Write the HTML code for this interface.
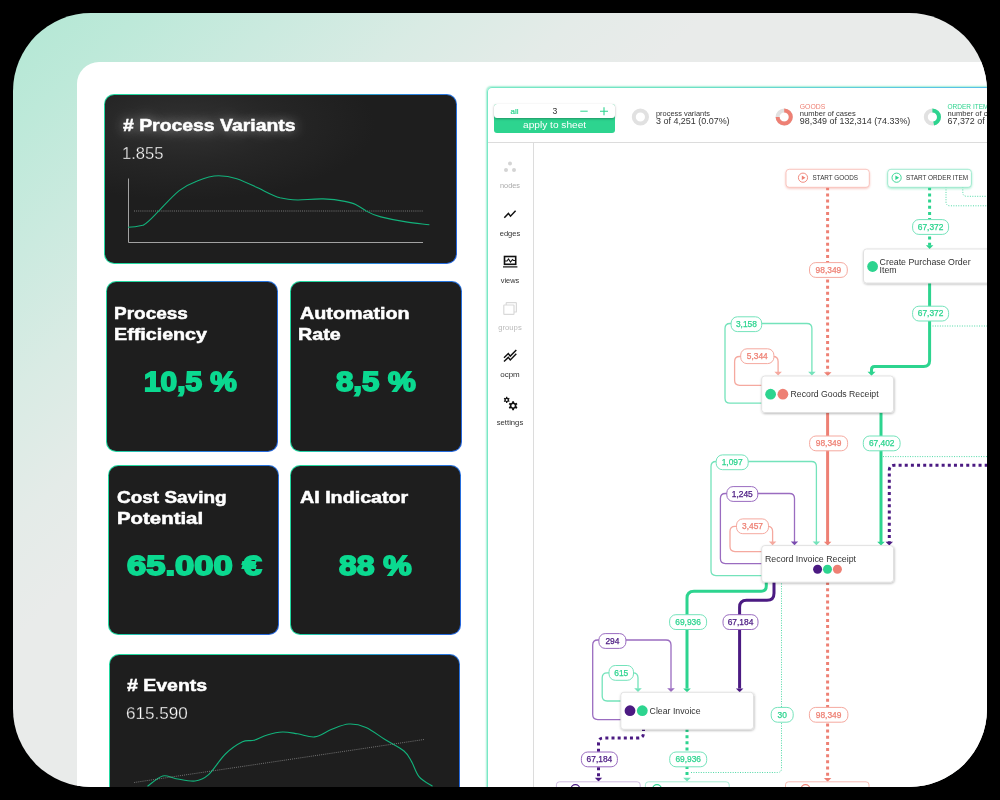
<!DOCTYPE html>
<html>
<head>
<meta charset="utf-8">
<title>Process Mining Dashboard</title>
<style>
html,body{margin:0;padding:0;background:#000;}
body{width:1000px;height:800px;overflow:hidden;position:relative;font-family:"Liberation Sans",sans-serif;}
#frame{position:absolute;left:13px;top:13px;width:974px;height:774px;border-radius:78px;overflow:hidden;
  background:linear-gradient(138deg,#b3e7d4 0%,#bde9d9 7%,#cbeadf 15%,#d9ebe4 23%,#e4ebe8 31%,#e9ebea 38%,#e9ebea 100%);}
/* everything inside #stage uses page coordinates */
#stage{position:absolute;left:-13px;top:-13px;width:1000px;height:800px;will-change:transform;}
#panel{position:absolute;left:77px;top:62px;width:950px;height:780px;background:#fff;border-radius:22px 0 0 0;}
.card{position:absolute;border-radius:10px;background:linear-gradient(100deg,#22d8a0 0%,#22d8a0 18%,#2a86e0 55%,#2565dc 100%);}
.card>i{position:absolute;left:0.9px;top:0.9px;right:0.9px;bottom:0.9px;border-radius:9.2px;background:#1e1e1e;display:block;}
.t{position:absolute;white-space:nowrap;line-height:1;transform-origin:0 0;color:#fff;}
.b{font-weight:bold;}
.h{font-size:16.4px;font-weight:bold;-webkit-text-stroke:0.5px #fff;}
.v{font-size:27.8px;font-weight:bold;color:#0bd990;-webkit-text-stroke:1.8px #0bd990;}
.n{font-size:16.5px;color:#fff;-webkit-text-stroke:0.3px #262626;}

#dpanel{position:absolute;left:487px;top:87px;width:560px;height:760px;border-radius:5px 0 0 0;background:linear-gradient(90deg,#79e8c7 0%,#6fe2c6 35%,#5cc6e4 75%,#55b8ec 100%);box-shadow:-1px -0.5px 1.6px rgba(60,220,160,.45);}
#dpanel>i{position:absolute;left:1.1px;top:1.1px;right:0;bottom:0;background:#fff;border-radius:4px 0 0 0;display:block;}
#hdiv{position:absolute;left:488px;top:142px;width:520px;height:1px;background:#dcdcdc;}
#vdiv{position:absolute;left:533px;top:142px;width:1px;height:680px;background:#dcdcdc;}
#widget{position:absolute;left:494px;top:104px;width:121px;height:29.4px;border-radius:3px;background:#2dd48f;}
#wtop{position:absolute;left:0;top:0;width:121px;height:14.4px;background:#fff;border-radius:3px;box-shadow:0 1px 2.5px rgba(0,0,0,.3);}
svg{position:absolute;left:0;top:0;}
</style>
</head>
<body>
<div id="frame"><div id="stage">
<div id="panel"></div>

<!-- LEFT CARDS -->
<div class="card" style="left:104px;top:94px;width:352.6px;height:169.8px;background:linear-gradient(100deg,#22d8a0 0%,#22d8a0 45%,#2a86e0 80%,#2565dc 100%);"><i style="background:radial-gradient(ellipse 190px 75px at 80px 30px,#323232 0%,#262626 50%,#1e1e1e 100%);"></i></div>
<div class="card" style="left:106px;top:281px;width:172px;height:171px;"><i></i></div>
<div class="card" style="left:290px;top:281px;width:172px;height:171px;"><i></i></div>
<div class="card" style="left:108px;top:465px;width:171px;height:170px;"><i></i></div>
<div class="card" style="left:290px;top:465px;width:171px;height:170px;"><i></i></div>
<div class="card" style="left:109px;top:654px;width:351px;height:170px;background:linear-gradient(100deg,#22d8a0 0%,#22d8a0 45%,#2a86e0 80%,#2565dc 100%);"><i></i></div>

<div id="txt">
<span class="t h" id="t1" style="transform:scaleX(1.141);left:122.9px;top:117px;font-size:17px;text-shadow:0 0 10px rgba(255,255,255,.5),0 0 20px rgba(255,255,255,.3),0 0 30px rgba(255,255,255,.15);">#&nbsp;Process Variants</span>
<span class="t n" id="t2" style="transform:scaleX(1.005);left:121.6px;top:145px;">1.855</span>

<span class="t h" id="t3" style="transform:scaleX(1.158);left:113.6px;top:305px;">Process</span>
<span class="t h" id="t4" style="transform:scaleX(1.201);left:113.6px;top:326px;">Efficiency</span>
<span class="t v" id="t5" style="transform:scaleX(1.072);left:144.0px;top:367.7px;">10,5 %</span>

<span class="t h" id="t6" style="transform:scaleX(1.204);left:299.6px;top:305px;">Automation</span>
<span class="t h" id="t7" style="transform:scaleX(1.200);left:298.2px;top:326px;">Rate</span>
<span class="t v" id="t8" style="transform:scaleX(1.123);left:336.0px;top:367.7px;">8,5 %</span>

<span class="t h" id="t9" style="transform:scaleX(1.157);left:116.8px;top:489px;">Cost Saving</span>
<span class="t h" id="t10" style="transform:scaleX(1.244);left:116.9px;top:510px;">Potential</span>
<span class="t v" id="t11" style="transform:scaleX(1.245);left:126.5px;top:551.7px;">65.000 €</span>

<span class="t h" id="t12" style="transform:scaleX(1.201);left:299.6px;top:489px;">AI Indicator</span>
<span class="t v" id="t13" style="transform:scaleX(1.148);left:339.2px;top:551.7px;">88 %</span>

<span class="t h" id="t14" style="transform:scaleX(1.147);left:127.2px;top:677px;font-size:17px;">#&nbsp;Events</span>
<span class="t n" id="t15" style="transform:scaleX(1.036);left:125.9px;top:705px;">615.590</span>
</div>


<!-- RIGHT PANEL -->
<div id="dpanel"><i></i></div>
<div id="hdiv"></div><div id="vdiv"></div>

<!-- selector widget -->
<div id="widget"><div id="wtop"></div><div id="wbot"></div></div>

<svg width="1000" height="800" viewBox="0 0 1000 800" id="diagram" font-family="Liberation Sans, sans-serif">
<defs>
<filter id="sh" x="-10%" y="-20%" width="120%" height="150%"><feDropShadow dx="0.5" dy="1" stdDeviation="1.1" flood-color="#000" flood-opacity="0.28"/></filter>
<filter id="shr" x="-10%" y="-30%" width="120%" height="170%"><feDropShadow dx="0" dy="1" stdDeviation="1" flood-color="#ee8074" flood-opacity="0.45"/></filter>
<filter id="shg" x="-10%" y="-30%" width="120%" height="170%"><feDropShadow dx="0" dy="1" stdDeviation="1" flood-color="#2dd48f" flood-opacity="0.45"/></filter>
</defs>
<!-- widget text -->
<text x="514.6" y="113.8" font-size="8" fill="#2dd48f" text-anchor="middle" stroke="#2dd48f" stroke-width="0.2">all</text>
<text x="555" y="114.2" font-size="8.6" fill="#333" text-anchor="middle">3</text>
<path d="M580.3 111.2H587.7" stroke="#2dd48f" stroke-width="1" fill="none"/>
<path d="M600 111.2H608M604 107.2V115.2" stroke="#2dd48f" stroke-width="1.1" fill="none"/>
<text x="554.6" y="128.2" font-size="9.2" fill="#fff" text-anchor="middle" textLength="63" lengthAdjust="spacingAndGlyphs">apply to sheet</text>
<circle cx="640.4" cy="117.0" r="6.6" fill="none" stroke="#e1e1e1" stroke-width="4"/>
<text x="656.0" y="116.0" font-size="6.6" fill="#333" text-anchor="start" textLength="54.0" lengthAdjust="spacingAndGlyphs">process variants</text>
<text x="656.0" y="124.4" font-size="8.7" fill="#333" text-anchor="start" textLength="73.6" lengthAdjust="spacingAndGlyphs">3 of 4,251 (0.07%)</text>
<circle cx="784.2" cy="117.0" r="6.6" fill="none" stroke="#e1e1e1" stroke-width="4"/>
<circle cx="784.2" cy="117.0" r="6.6" fill="none" stroke="#ee8074" stroke-width="4" stroke-dasharray="30.82 41.47" transform="rotate(-90 784.2 117.0)"/>
<text x="799.8" y="108.6" font-size="6.6" fill="#ee8074" text-anchor="start" textLength="25.5" lengthAdjust="spacingAndGlyphs">GOODS</text>
<text x="799.8" y="116.0" font-size="6.6" fill="#333" text-anchor="start" textLength="56.0" lengthAdjust="spacingAndGlyphs">number of cases</text>
<text x="799.8" y="124.4" font-size="8.7" fill="#333" text-anchor="start" textLength="110.5" lengthAdjust="spacingAndGlyphs">98,349 of 132,314 (74.33%)</text>
<circle cx="932.4" cy="117.0" r="6.6" fill="none" stroke="#e1e1e1" stroke-width="4"/>
<circle cx="932.4" cy="117.0" r="6.6" fill="none" stroke="#2dd48f" stroke-width="4" stroke-dasharray="19.28 41.47" transform="rotate(-90 932.4 117.0)"/>
<text x="947.5" y="108.6" font-size="6.6" fill="#2dd48f" text-anchor="start" textLength="41.0" lengthAdjust="spacingAndGlyphs">ORDER ITEM</text>
<text x="947.5" y="116.0" font-size="6.6" fill="#333" text-anchor="start" textLength="56.0" lengthAdjust="spacingAndGlyphs">number of cases</text>
<text x="947.5" y="124.4" font-size="8.7" fill="#333" text-anchor="start" textLength="110.5" lengthAdjust="spacingAndGlyphs">67,372 of 132,314 (50.92%)</text>
<!-- sidebar -->
<g id="sidebar">
<circle cx="510" cy="163.4" r="2" fill="#d4d4d4"/><circle cx="506" cy="170" r="2" fill="#d4d4d4"/><circle cx="514" cy="170" r="2" fill="#d4d4d4"/>
<text x="510" y="188" font-size="6.8" fill="#aaa" text-anchor="middle" textLength="20" lengthAdjust="spacingAndGlyphs">nodes</text>
<path d="M504.3 217.8L508.4 213.4L510.5 216.2L515.6 210.8" fill="none" stroke="#111" stroke-width="1.5" stroke-linejoin="miter"/>
<text x="510" y="235.5" font-size="6.8" fill="#333" text-anchor="middle" textLength="20.5" lengthAdjust="spacingAndGlyphs">edges</text>
<rect x="504.5" y="256.5" width="11.2" height="7.8" fill="none" stroke="#111" stroke-width="1.6"/>
<path d="M505 261H507L508.5 259L510.5 262L512.5 259.5L513.5 260.5H515.5" fill="none" stroke="#111" stroke-width="1.1"/>
<path d="M503 266.9H517.4" stroke="#111" stroke-width="1.2"/>
<text x="510" y="283" font-size="6.8" fill="#333" text-anchor="middle" textLength="18.5" lengthAdjust="spacingAndGlyphs">views</text>
<rect x="506.2" y="302.6" width="10.2" height="9.4" rx="0.6" fill="none" stroke="#d9d9d9" stroke-width="1.2"/>
<rect x="503.8" y="305" width="10.2" height="9.4" rx="0.6" fill="#fff" stroke="#d9d9d9" stroke-width="1.2"/>
<text x="510" y="330.3" font-size="6.8" fill="#bbb" text-anchor="middle" textLength="23.5" lengthAdjust="spacingAndGlyphs">groups</text>
<path d="M504 357.8L508.3 353.6L510.3 356.1L516.3 350M504 361.6L508.3 357.4L510.3 359.9L516.3 353.8" fill="none" stroke="#111" stroke-width="1.45"/>
<text x="510" y="377.2" font-size="6.8" fill="#333" text-anchor="middle" textLength="19.5" lengthAdjust="spacingAndGlyphs">ocpm</text>
<path d="M508.86 400.32 L509.63 400.91 L509.04 401.93 L508.14 401.56 L507.42 401.98 L507.29 402.94 L506.11 402.94 L505.98 401.98 L505.26 401.56 L504.36 401.93 L503.77 400.91 L504.54 400.32 L504.54 399.48 L503.77 398.89 L504.36 397.87 L505.26 398.24 L505.98 397.82 L506.11 396.86 L507.29 396.86 L507.42 397.82 L508.14 398.24 L509.04 397.87 L509.63 398.89 L508.86 399.48 Z M505.70 399.90 a1.00 1.00 0 1 0 2.00 0 a1.00 1.00 0 1 0 -2.00 0 Z M516.34 406.33 L517.45 407.20 L516.57 408.72 L515.26 408.19 L514.17 408.82 L513.98 410.22 L512.22 410.22 L512.03 408.82 L510.94 408.19 L509.63 408.72 L508.75 407.20 L509.86 406.33 L509.86 405.07 L508.75 404.20 L509.63 402.68 L510.94 403.21 L512.03 402.58 L512.22 401.18 L513.98 401.18 L514.17 402.58 L515.26 403.21 L516.57 402.68 L517.45 404.20 L516.34 405.07 Z M511.40 405.70 a1.70 1.70 0 1 0 3.40 0 a1.70 1.70 0 1 0 -3.40 0 Z" fill="#111" fill-rule="evenodd"/>
<text x="510" y="424.8" font-size="6.8" fill="#333" text-anchor="middle" textLength="26.5" lengthAdjust="spacingAndGlyphs">settings</text>
</g>
<path d="M827.6 187.3 L827.6 372.5" fill="none" stroke="#ee8074" stroke-width="3.0" stroke-dasharray="3 3.15"/>
<path d="M824.0 372.2 L831.5 372.2 L827.7 376.0 Z" fill="#ee8074"/>
<path d="M929.6 187.3 L929.6 245.6" fill="none" stroke="#2dd48f" stroke-width="3.0" stroke-dasharray="3 3.15"/>
<path d="M946.0 187.0 L946.0 201.8 Q946.0 205.8 950.0 205.8 L1000.0 205.8" fill="none" stroke="#4fd9a6" stroke-width="1" stroke-dasharray="1 1.45"/>
<path d="M962.8 187.0 L962.8 192.3 Q962.8 196.3 966.8 196.3 L1000.0 196.3" fill="none" stroke="#4fd9a6" stroke-width="1" stroke-dasharray="1 1.45"/>
<path d="M929.6 283.0 L929.6 360.4 Q929.6 366.4 923.6 366.4 L874.5 366.4 Q871.5 366.4 871.5 369.4 L871.5 372.5" fill="none" stroke="#2dd48f" stroke-width="3.0"/>
<path d="M867.5 371.8 L875.5 371.8 L871.5 375.8 Z" fill="#2dd48f"/>
<path d="M932.5 326.0 L1000.0 326.0" fill="none" stroke="#4fd9a6" stroke-width="1" stroke-dasharray="1 1.45"/>
<path d="M762.0 403.2 L730.0 403.2 Q725.0 403.2 725.0 398.2 L725.0 328.5 Q725.0 323.5 730.0 323.5 L806.9 323.5 Q811.9 323.5 811.9 328.5 L811.9 372.5" fill="none" stroke="#74e3bb" stroke-width="1.3"/>
<path d="M808.1 371.8 L815.6 371.8 L811.9 375.6 Z" fill="#74e3bb"/>
<path d="M762.0 385.3 L739.6 385.3 Q734.6 385.3 734.6 380.3 L734.6 361.5 Q734.6 356.5 739.6 356.5 L773.1 356.5 Q778.1 356.5 778.1 361.5 L778.1 372.5" fill="none" stroke="#f5a99f" stroke-width="1.3"/>
<path d="M774.4 371.8 L781.9 371.8 L778.1 375.6 Z" fill="#f5a99f"/>
<path d="M827.6 412.0 L827.6 542.0" fill="none" stroke="#ee8074" stroke-width="3.0"/>
<path d="M823.9 541.7 L831.4 541.7 L827.6 545.5 Z" fill="#ee8074"/>
<path d="M881.0 412.0 L881.0 542.0" fill="none" stroke="#2dd48f" stroke-width="3.0"/>
<path d="M877.2 541.7 L884.8 541.7 L881.0 545.5 Z" fill="#2dd48f"/>
<path d="M883.0 456.6 L1000.0 456.6" fill="none" stroke="#4fd9a6" stroke-width="1" stroke-dasharray="1 1.45"/>
<path d="M1000.0 465.3 L894.3 465.3 Q889.3 465.3 889.3 470.3 L889.3 542.0" fill="none" stroke="#4b1a82" stroke-width="3.0" stroke-dasharray="3 3.15"/>
<path d="M885.5 541.7 L893.0 541.7 L889.3 545.5 Z" fill="#4b1a82"/>
<path d="M762.0 575.6 L716.0 575.6 Q711.0 575.6 711.0 570.6 L711.0 466.5 Q711.0 461.5 716.0 461.5 L811.4 461.5 Q816.4 461.5 816.4 466.5 L816.4 542.0" fill="none" stroke="#74e3bb" stroke-width="1.3"/>
<path d="M812.6 541.5 L820.1 541.5 L816.4 545.3 Z" fill="#74e3bb"/>
<path d="M762.0 563.6 L725.4 563.6 Q720.4 563.6 720.4 558.6 L720.4 498.5 Q720.4 493.5 725.4 493.5 L789.5 493.5 Q794.5 493.5 794.5 498.5 L794.5 542.0" fill="none" stroke="#9a6cc0" stroke-width="1.3"/>
<path d="M790.8 541.5 L798.2 541.5 L794.5 545.3 Z" fill="#7a4cb0"/>
<path d="M762.0 551.6 L735.0 551.6 Q730.0 551.6 730.0 546.6 L730.0 531.3 Q730.0 526.3 735.0 526.3 L767.6 526.3 Q772.6 526.3 772.6 531.3 L772.6 542.0" fill="none" stroke="#f5a99f" stroke-width="1.3"/>
<path d="M768.9 541.5 L776.4 541.5 L772.6 545.3 Z" fill="#f5a99f"/>
<path d="M766.3 581.0 L766.3 586.1 Q766.3 591.2 761.2 591.2 L694.0 591.2 Q687.0 591.2 687.0 598.2 L687.0 688.6" fill="none" stroke="#2dd48f" stroke-width="3.0"/>
<path d="M683.2 688.5 L690.8 688.5 L687.0 692.3 Z" fill="#2dd48f"/>
<path d="M774.0 581.0 L774.0 593.2 Q774.0 600.2 767.0 600.2 L746.6 600.2 Q739.6 600.2 739.6 607.2 L739.6 688.6" fill="none" stroke="#4b1a82" stroke-width="3.0"/>
<path d="M735.9 688.5 L743.4 688.5 L739.6 692.3 Z" fill="#4b1a82"/>
<path d="M781.5 581.0 L781.5 768.5 Q781.5 772.5 777.5 772.5 L690.0 772.5" fill="none" stroke="#4fd9a6" stroke-width="1" stroke-dasharray="1 1.45"/>
<path d="M827.6 582.0 L827.6 778.2" fill="none" stroke="#ee8074" stroke-width="3.0" stroke-dasharray="3 3.15"/>
<path d="M823.9 777.9 L831.4 777.9 L827.6 781.7 Z" fill="#ee8074"/>
<path d="M621.0 719.6 L597.7 719.6 Q592.7 719.6 592.7 714.6 L592.7 645.0 Q592.7 640.0 597.7 640.0 L666.0 640.0 Q671.0 640.0 671.0 645.0 L671.0 688.6" fill="none" stroke="#9a6cc0" stroke-width="1.3"/>
<path d="M667.2 688.2 L674.8 688.2 L671.0 692.0 Z" fill="#9a6cc0"/>
<path d="M621.0 701.0 L607.2 701.0 Q602.2 701.0 602.2 696.0 L602.2 677.8 Q602.2 672.8 607.2 672.8 L633.0 672.8 Q638.0 672.8 638.0 677.8 L638.0 688.6" fill="none" stroke="#74e3bb" stroke-width="1.3"/>
<path d="M634.2 688.2 L641.8 688.2 L638.0 692.0 Z" fill="#74e3bb"/>
<path d="M643.5 728.0 L643.5 733.0 Q643.5 738.0 638.5 738.0 L603.5 738.0 Q598.5 738.0 598.5 743.0 L598.5 777.6" fill="none" stroke="#4b1a82" stroke-width="3.0" stroke-dasharray="3 3.15"/>
<path d="M594.8 777.7 L602.2 777.7 L598.5 781.5 Z" fill="#4b1a82"/>
<path d="M687.0 729.0 L687.0 777.6" fill="none" stroke="#2dd48f" stroke-width="3.0" stroke-dasharray="3 3.15"/>
<path d="M683.2 777.7 L690.8 777.7 L687.0 781.5 Z" fill="#74e3bb"/>
<rect x="809.5" y="262.6" width="37.8" height="14.8" rx="6.3" fill="#fff" stroke="#f5a99f" stroke-width="1"/>
<text x="828.4" y="272.7" font-size="8.4" fill="#ee8074" stroke="#ee8074" stroke-width="0.25" text-anchor="middle">98,349</text>
<rect x="912.6" y="219.6" width="36.0" height="14.8" rx="6.3" fill="#fff" stroke="#74e3bb" stroke-width="1"/>
<text x="930.6" y="229.7" font-size="8.4" fill="#2dd48f" stroke="#2dd48f" stroke-width="0.25" text-anchor="middle">67,372</text>
<rect x="912.6" y="306.2" width="36.0" height="14.8" rx="6.3" fill="#fff" stroke="#74e3bb" stroke-width="1"/>
<text x="930.6" y="316.3" font-size="8.4" fill="#2dd48f" stroke="#2dd48f" stroke-width="0.25" text-anchor="middle">67,372</text>
<rect x="731.1" y="316.8" width="30.6" height="14.8" rx="6.3" fill="#fff" stroke="#74e3bb" stroke-width="1"/>
<text x="746.4" y="326.9" font-size="8.4" fill="#2dd48f" stroke="#2dd48f" stroke-width="0.25" text-anchor="middle">3,158</text>
<rect x="740.7" y="348.8" width="33.2" height="14.8" rx="6.3" fill="#fff" stroke="#f5a99f" stroke-width="1"/>
<text x="757.3" y="358.9" font-size="8.4" fill="#ee8074" stroke="#ee8074" stroke-width="0.25" text-anchor="middle">5,344</text>
<rect x="809.6" y="436.0" width="38.0" height="14.8" rx="6.3" fill="#fff" stroke="#f5a99f" stroke-width="1"/>
<text x="828.6" y="446.1" font-size="8.4" fill="#ee8074" stroke="#ee8074" stroke-width="0.25" text-anchor="middle">98,349</text>
<rect x="863.3" y="436.0" width="36.8" height="14.8" rx="6.3" fill="#fff" stroke="#74e3bb" stroke-width="1"/>
<text x="881.7" y="446.1" font-size="8.4" fill="#2dd48f" stroke="#2dd48f" stroke-width="0.25" text-anchor="middle">67,402</text>
<rect x="716.2" y="454.9" width="32.0" height="14.8" rx="6.3" fill="#fff" stroke="#74e3bb" stroke-width="1"/>
<text x="732.2" y="465.0" font-size="8.4" fill="#2dd48f" stroke="#2dd48f" stroke-width="0.25" text-anchor="middle">1,097</text>
<rect x="726.8" y="486.6" width="31.0" height="14.8" rx="6.3" fill="#fff" stroke="#9a6cc0" stroke-width="1"/>
<text x="742.3" y="496.7" font-size="8.4" fill="#4b1a82" stroke="#4b1a82" stroke-width="0.25" text-anchor="middle">1,245</text>
<rect x="736.5" y="518.9" width="32.0" height="14.8" rx="6.3" fill="#fff" stroke="#f5a99f" stroke-width="1"/>
<text x="752.5" y="529.0" font-size="8.4" fill="#ee8074" stroke="#ee8074" stroke-width="0.25" text-anchor="middle">3,457</text>
<rect x="669.6" y="614.7" width="37.0" height="14.8" rx="6.3" fill="#fff" stroke="#74e3bb" stroke-width="1"/>
<text x="688.1" y="624.8" font-size="8.4" fill="#2dd48f" stroke="#2dd48f" stroke-width="0.25" text-anchor="middle">69,936</text>
<rect x="723.0" y="614.7" width="35.0" height="14.8" rx="6.3" fill="#fff" stroke="#9a6cc0" stroke-width="1"/>
<text x="740.5" y="624.8" font-size="8.4" fill="#4b1a82" stroke="#4b1a82" stroke-width="0.25" text-anchor="middle">67,184</text>
<rect x="598.9" y="633.6" width="27.0" height="14.8" rx="6.3" fill="#fff" stroke="#9a6cc0" stroke-width="1"/>
<text x="612.4" y="643.7" font-size="8.4" fill="#4b1a82" stroke="#4b1a82" stroke-width="0.25" text-anchor="middle">294</text>
<rect x="609.0" y="665.5" width="24.5" height="14.8" rx="6.3" fill="#fff" stroke="#74e3bb" stroke-width="1"/>
<text x="621.3" y="675.6" font-size="8.4" fill="#2dd48f" stroke="#2dd48f" stroke-width="0.25" text-anchor="middle">615</text>
<rect x="771.2" y="707.4" width="22.0" height="14.8" rx="6.3" fill="#fff" stroke="#74e3bb" stroke-width="1"/>
<text x="782.2" y="717.5" font-size="8.4" fill="#2dd48f" stroke="#2dd48f" stroke-width="0.25" text-anchor="middle">30</text>
<rect x="809.4" y="707.4" width="38.5" height="14.8" rx="6.3" fill="#fff" stroke="#f5a99f" stroke-width="1"/>
<text x="828.6" y="717.5" font-size="8.4" fill="#ee8074" stroke="#ee8074" stroke-width="0.25" text-anchor="middle">98,349</text>
<rect x="581.4" y="752.0" width="36.0" height="14.8" rx="6.3" fill="#fff" stroke="#9a6cc0" stroke-width="1"/>
<text x="599.4" y="762.1" font-size="8.4" fill="#4b1a82" stroke="#4b1a82" stroke-width="0.25" text-anchor="middle">67,184</text>
<rect x="669.7" y="752.0" width="37.0" height="14.8" rx="6.3" fill="#fff" stroke="#74e3bb" stroke-width="1"/>
<text x="688.2" y="762.1" font-size="8.4" fill="#2dd48f" stroke="#2dd48f" stroke-width="0.25" text-anchor="middle">69,936</text>
<rect x="786.0" y="169.3" width="83.3" height="18" rx="3.2" fill="#fff" stroke="#f8c0b9" stroke-width="0.9" filter="url(#shr)"/>
<circle cx="803.0" cy="177.7" r="4.6" fill="none" stroke="#ee8074" stroke-width="0.9"/>
<path d="M801.8 175.4 L805.5 177.7 L801.8 180 Z" fill="#ee8074"/>
<text x="812.5" y="180.2" font-size="6.5" fill="#333" text-anchor="start" textLength="45.5" lengthAdjust="spacingAndGlyphs">START GOODS</text>
<rect x="887.7" y="169.3" width="83.7" height="18" rx="3.2" fill="#fff" stroke="#98e9cc" stroke-width="0.9" filter="url(#shg)"/>
<circle cx="896.6" cy="177.7" r="4.6" fill="none" stroke="#2dd48f" stroke-width="0.9"/>
<path d="M895.4 175.4 L899.1 177.7 L895.4 180 Z" fill="#2dd48f"/>
<text x="906.0" y="180.2" font-size="6.5" fill="#333" text-anchor="start" textLength="62.0" lengthAdjust="spacingAndGlyphs">START ORDER ITEM</text>
<rect x="863.5" y="249.0" width="146.5" height="34.0" rx="3" fill="#fff" stroke="#dcdcdc" stroke-width="0.8" filter="url(#sh)"/>
<circle cx="872.6" cy="266.5" r="5.4" fill="#2dd48f"/>
<text x="879.6" y="265.4" font-size="8.6" fill="#333" text-anchor="start" textLength="91.0" lengthAdjust="spacingAndGlyphs">Create Purchase Order</text>
<text x="879.6" y="273.4" font-size="8.6" fill="#333" text-anchor="start" textLength="17.0" lengthAdjust="spacingAndGlyphs">Item</text>
<path d="M925.9 245.2 L933.4 245.2 L929.6 249.0 Z" fill="#2dd48f"/>
<rect x="761.7" y="376.0" width="131.8" height="36.5" rx="3" fill="#fff" stroke="#dcdcdc" stroke-width="0.8" filter="url(#sh)"/>
<circle cx="770.6" cy="394.2" r="5.4" fill="#2dd48f"/>
<circle cx="782.9" cy="394.2" r="5.4" fill="#ee8074"/>
<text x="790.6" y="397.3" font-size="8.5" fill="#333" text-anchor="start" textLength="88.0" lengthAdjust="spacingAndGlyphs">Record Goods Receipt</text>
<rect x="761.7" y="545.6" width="131.8" height="36.6" rx="3" fill="#fff" stroke="#dcdcdc" stroke-width="0.8" filter="url(#sh)"/>
<text x="765.0" y="561.6" font-size="8.6" fill="#333" text-anchor="start" textLength="91.0" lengthAdjust="spacingAndGlyphs">Record Invoice Receipt</text>
<circle cx="817.6" cy="569.3" r="4.5" fill="#4b1a82"/>
<circle cx="827.5" cy="569.3" r="4.5" fill="#2dd48f"/>
<circle cx="837.4" cy="569.3" r="4.5" fill="#ee8074"/>
<rect x="620.8" y="692.3" width="132.7" height="37.0" rx="3" fill="#fff" stroke="#dcdcdc" stroke-width="0.8" filter="url(#sh)"/>
<circle cx="630.0" cy="710.7" r="5.4" fill="#4b1a82"/>
<circle cx="642.3" cy="710.7" r="5.4" fill="#2dd48f"/>
<text x="649.6" y="713.7" font-size="8.5" fill="#333" text-anchor="start" textLength="51.0" lengthAdjust="spacingAndGlyphs">Clear Invoice</text>
<rect x="556.4" y="781.8" width="83.8" height="18" rx="3" fill="#fff" stroke="#c9b3de" stroke-width="0.9"/>
<circle cx="575.4" cy="789" r="4.4" fill="none" stroke="#4b1a82" stroke-width="1.2"/>
<rect x="645.4" y="781.8" width="83.8" height="18" rx="3" fill="#fff" stroke="#9eeacf" stroke-width="0.9"/>
<circle cx="657.0" cy="789" r="4.4" fill="none" stroke="#2dd48f" stroke-width="1.2"/>
<rect x="785.5" y="781.8" width="83.5" height="18" rx="3" fill="#fff" stroke="#f6b4ac" stroke-width="0.9"/>
<circle cx="805.5" cy="789" r="4.4" fill="none" stroke="#ee8074" stroke-width="1.2"/>
</svg>

<!-- CHARTS -->
<svg width="1000" height="800" viewBox="0 0 1000 800" id="charts">
  <path d="M128.5 178.5V242.5H423" fill="none" stroke="#a2a2a2" stroke-width="1"/>
  <path d="M134 211H423" fill="none" stroke="#a0a0a0" stroke-width="0.7" stroke-dasharray="1 1.1"/>
  <path d="M128 227.3C135 227.3 138 226.5 143.2 225.2C149 222 154 215.5 159.4 210.4C166 203.5 172 196.5 179.2 190.6C185 186.3 191 183.2 197.2 180.9C204 178.2 211 175.9 218.8 175.8C225 175.8 231 176.8 236.8 178.7C244 181.2 251 184.6 258.4 188.1C266 191.7 273 195.8 280 197.8C286 199.3 292 199.8 298 200C306 199.8 314 198.7 323.2 198.9C331 199.2 338 200 344.8 201.4C349 202.2 352.5 203 355.6 204.6C360 206.8 363 209 366.4 211.1C371 213.8 376 215.6 380.8 216.9C389 219 398 220.7 406 221.9C414 223.2 421 223.8 429.4 224.8" fill="none" stroke="#12b27b" stroke-width="1.1"/>
<path d="M147.5 786.3 C150.0 784.6 157.9 777.3 162.7 776.0 C167.4 774.7 170.6 777.9 176.0 778.7 C181.4 779.5 189.6 781.6 195.0 781.0 C200.4 780.4 203.2 779.4 208.3 774.9 C213.4 770.4 219.7 759.5 225.4 754.0 C231.1 748.5 237.8 744.1 242.5 741.8 C247.2 739.5 249.8 741.4 253.9 740.3 C258.0 739.2 262.4 736.4 267.2 735.0 C271.9 733.6 277.3 732.2 282.4 732.0 C287.5 731.8 292.2 733.0 297.6 733.8 C303.0 734.6 309.0 737.6 314.7 736.9 C320.4 736.1 326.1 731.4 331.8 729.3 C337.5 727.1 343.2 724.3 348.9 724.0 C354.6 723.7 360.0 724.8 366.0 727.4 C372.0 730.0 378.7 735.6 385.0 739.5 C391.3 743.4 399.6 747.3 404.0 751.0 C408.4 754.7 409.1 757.3 411.6 761.6 C414.1 765.9 415.7 772.7 419.2 776.8 C422.7 780.9 430.3 784.7 432.5 786.3" fill="none" stroke="#12b27b" stroke-width="1.1"/>
  <path d="M134.2 782.5L424 739.5" fill="none" stroke="#9a9a9a" stroke-width="0.7" stroke-dasharray="1 1.1"/>
</svg>
</div></div>
</body>
</html>
